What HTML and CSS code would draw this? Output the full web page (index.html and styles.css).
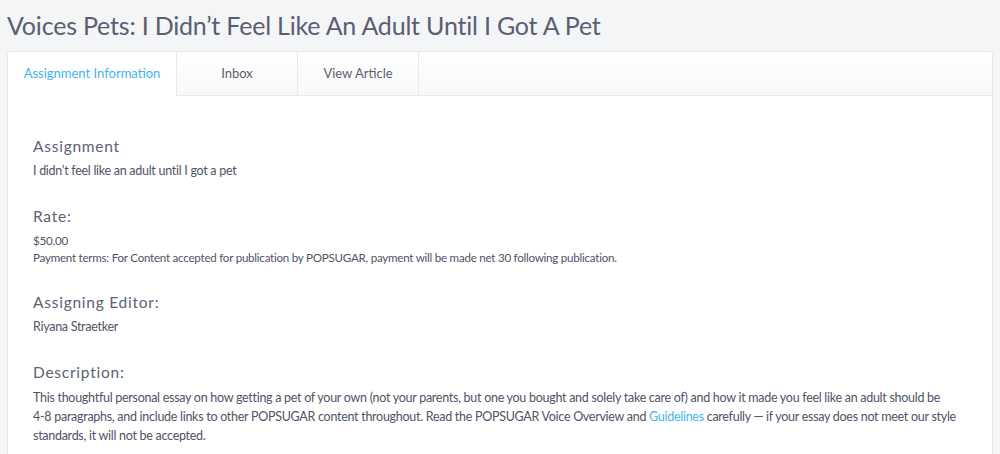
FILE: index.html
```html
<!DOCTYPE html>
<html>
<head>
<meta charset="utf-8">
<link rel="stylesheet" href="styles.css">
</head>
<body>
<h1 class="page-title">Voices Pets: I Didn’t Feel Like An Adult Until I Got A Pet</h1>
<div class="card">
  <div class="tabs">
    <div class="tab active">Assignment Information</div>
    <div class="tab">Inbox</div>
    <div class="tab">View Article</div>
    <div class="tab-fill"></div>
  </div>
  <div class="content">
    <section class="block">
      <h2 class="label">Assignment</h2>
      <p class="text">I didn’t feel like an adult until I got a pet</p>
    </section>
    <section class="block">
      <h2 class="label">Rate:</h2>
      <p class="text small">$50.00<br>Payment terms: For Content accepted for publication by POPSUGAR, payment will be made net 30 following publication.</p>
    </section>
    <section class="block">
      <h2 class="label">Assigning Editor:</h2>
      <p class="text">Riyana Straetker</p>
    </section>
    <section class="block">
      <h2 class="label">Description:</h2>
      <p class="text desc">This thoughtful personal essay on how getting a pet of your own (not your parents, but one you bought and solely take care of) and how it made you feel like an adult should be<br><span class="nowrap">4-8</span> paragraphs, and include links to other POPSUGAR content throughout. Read the POPSUGAR Voice Overview and <a class="link" href="#">Guidelines</a> carefully — if your essay does not meet our style standards, it will not be accepted.</p>
    </section>
  </div>
</div>
</body>
</html>
```

FILE: styles.css
```css
html, body {
  margin: 0;
  padding: 0;
  background: #f4f5f7;
  font-family: "Lato", sans-serif;
  color: #4f5366;
}
html {
  height: 454px;
  overflow: hidden;
}
body {
  padding: 0 7px;
  height: 454px;
  overflow: hidden;
}
.page-title {
  margin: 0;
  padding-top: 9px;
  height: 51px;
  box-sizing: border-box;
  font-size: 25px;
  font-weight: 400;
  letter-spacing: -0.2px;
  color: #5a5e72;
  line-height: 32px;
}
.card {
  background: #fff;
  border: 1px solid #e5e7eb;
  border-radius: 4px;
  overflow: hidden;
}
.tabs {
  display: flex;
  height: 44px;
  background: linear-gradient(#ffffff, #f7f8f9);
}
.tab {
  display: flex;
  align-items: center;
  justify-content: center;
  padding-bottom: 1px;
  width: 120px;
  border-right: 1px solid #e7e9ec;
  border-bottom: 1px solid #e7e9ec;
  font-size: 13px;
  color: #5b5f71;
}
.tab.active {
  width: 168px;
  background: #fff;
  border-bottom-color: transparent;
  color: #43b4ec;
}
.tab-fill {
  flex: 1;
  border-bottom: 1px solid #e7e9ec;
}
.content {
  padding: 39px 20px 20px 25px;
}
.block {
  margin-bottom: 25px;
}
.label {
  margin: 0 0 5px;
  font-size: 15.5px;
  font-weight: 400;
  letter-spacing: 0.75px;
  color: #5c6175;
  line-height: 22px;
}
.text {
  margin: 0;
  font-size: 12.5px;
  letter-spacing: -0.28px;
  line-height: 18px;
  color: #4f5366;
}
.small {
  font-size: 11.6px;
  letter-spacing: -0.25px;
  line-height: 17px;
}
.desc {
  line-height: 19px;
}
.nowrap {
  white-space: nowrap;
}
.link {
  color: #43b4ec;
  text-decoration: none;
}
```
